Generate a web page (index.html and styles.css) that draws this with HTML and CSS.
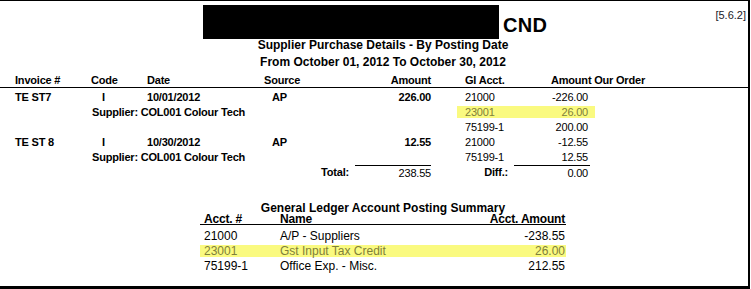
FILE: index.html
```html
<!DOCTYPE html>
<html>
<head>
<meta charset="utf-8">
<link rel="stylesheet" href="styles.css">
</head>
<body>
<div class="page">
  <header class="top">
    <div class="brand">
      <div class="redact"></div>
      <div class="cnd">CND</div>
      <div class="ver">[5.6.2]</div>
    </div>
    <div class="titles">
      <div>Supplier Purchase Details - By Posting Date</div>
      <div>From October 01, 2012 To October 30, 2012</div>
    </div>
  </header>

  <section class="detail">
    <div class="row head">
      <span class="c-inv">Invoice #</span>
      <span class="c-code">Code</span>
      <span class="c-date">Date</span>
      <span class="c-src">Source</span>
      <span class="c-amt">Amount</span>
      <div class="gl"><span class="gl-acct gl-head">Gl Acct.</span><span class="gl-head-amt">Amount Our Order</span></div>
    </div>
    <div class="rows">
      <div class="row">
        <span class="c-inv b">TE ST7</span>
        <span class="c-code b code-val">I</span>
        <span class="c-date b">10/01/2012</span>
        <span class="c-src b src-val">AP</span>
        <span class="c-amt b">226.00</span>
        <div class="gl"><span class="gl-acct">21000</span><span class="gl-amt">-226.00</span></div>
      </div>
      <div class="row">
        <span class="c-supp b">Supplier: COL001 Colour Tech</span>
        <div class="gl hl"><span class="gl-acct">23001</span><span class="gl-amt">26.00</span></div>
      </div>
      <div class="row">
        <div class="gl"><span class="gl-acct">75199-1</span><span class="gl-amt">200.00</span></div>
      </div>
      <div class="row">
        <span class="c-inv b">TE ST 8</span>
        <span class="c-code b code-val">I</span>
        <span class="c-date b">10/30/2012</span>
        <span class="c-src b src-val">AP</span>
        <span class="c-amt b">12.55</span>
        <div class="gl"><span class="gl-acct">21000</span><span class="gl-amt">-12.55</span></div>
      </div>
      <div class="row">
        <span class="c-supp b">Supplier: COL001 Colour Tech</span>
        <div class="gl"><span class="gl-acct">75199-1</span><span class="gl-amt">12.55</span></div>
      </div>
      <div class="row">
        <span class="c-src b total-lbl">Total:</span>
        <span class="c-amt ruled">238.55</span>
        <div class="gl"><span class="gl-acct diff-lbl b">Diff.:</span><span class="gl-amt ruled">0.00</span></div>
      </div>
    </div>
  </section>

  <section class="summary">
    <div class="sum-title">General Ledger Account Posting Summary</div>
    <div class="sum-row sum-head">
      <span class="s-acct">Acct. #</span>
      <span class="s-name">Name</span>
      <span class="s-amt">Acct. Amount</span>
    </div>
    <div class="sum-rows">
      <div class="sum-row">
        <span class="s-acct">21000</span>
        <span class="s-name">A/P - Suppliers</span>
        <span class="s-amt">-238.55</span>
      </div>
      <div class="sum-row hl">
        <span class="s-acct">23001</span>
        <span class="s-name">Gst Input Tax Credit</span>
        <span class="s-amt">26.00</span>
      </div>
      <div class="sum-row">
        <span class="s-acct">75199-1</span>
        <span class="s-name">Office Exp. - Misc.</span>
        <span class="s-amt">212.55</span>
      </div>
    </div>
  </section>
</div>
</body>
</html>
```

FILE: styles.css
```css
html, body {
  margin: 0;
  padding: 0;
  background: #fff;
}

body {
  font-family: "Liberation Sans", Arial, sans-serif;
  color: #000;
}

.page {
  width: 750px;
  height: 289px;
  box-sizing: border-box;
  border-top: 1px solid #000;
  border-right: 2px solid #000;
  border-bottom: 3px solid #000;
  overflow: hidden;
}

/* ---------- top header ---------- */
.top {
  padding-top: 4px;
}

.brand {
  display: flex;
  align-items: flex-start;
  padding-left: 203px;
  padding-right: 2px;
}

.redact {
  width: 296px;
  height: 34px;
  background: #000;
}

.cnd {
  margin-left: 4px;
  margin-top: 9px;
  font-size: 20px;
  font-weight: bold;
  line-height: 23px;
  letter-spacing: 0.3px;
}

.ver {
  margin-left: auto;
  margin-top: 3px;
  font-size: 11px;
  line-height: 15px;
  color: #1a1a2a;
}

.titles {
  margin-top: -2px;
  padding-left: 18px;
  text-align: center;
  font-size: 12px;
  font-weight: bold;
  line-height: 17px;
}

/* ---------- detail table ---------- */
.detail {
  margin-top: 2px;
  font-size: 11px;
  letter-spacing: -0.2px;
}

.row {
  display: grid;
  grid-template-columns: 15px 76px 56px 117px 91px 76px 26px 138px;
  height: 15px;
  line-height: 15px;
  white-space: nowrap;
}

.row.head {
  height: 14px;
  line-height: 14px;
  border-bottom: 1px solid #000;
  font-weight: bold;
}

.rows {
  margin-top: 2px;
}

.b { font-weight: bold; }

.c-inv  { grid-column: 2; }
.c-code { grid-column: 3; }
.c-date { grid-column: 4; }
.c-src  { grid-column: 5; }
.c-amt  { grid-column: 6; text-align: right; }
.c-supp { grid-column: 3 / 7; padding-left: 1px; }
.gl     { grid-column: 8; display: flex; }

.code-val { padding-left: 11px; }
.src-val  { padding-left: 8px; }

.total-lbl {
  text-align: right;
  padding-right: 6px;
}

.ruled {
  border-top: 1px solid #000;
}

.gl-acct {
  flex: 0 0 57px;
  box-sizing: border-box;
  padding-left: 8px;
}

.gl-acct.gl-head { flex-basis: 94px; }

.gl-head-amt { flex: 0 0 auto; }

.gl-amt {
  flex: 0 0 76px;
  box-sizing: border-box;
  text-align: right;
  padding-right: 2px;
}

.diff-lbl {
  text-align: right;
  padding-left: 0;
  padding-right: 6px;
}

.gl.hl {
  background: #fafa80;
  color: #80803a;
  height: 12px;
  line-height: 12px;
  margin-top: 1px;
}

/* ---------- summary ---------- */
.summary {
  width: 366px;
  margin-left: 200px;
  margin-top: 22px;
  font-size: 12px;
}

.sum-title {
  text-align: center;
  font-weight: bold;
  line-height: 12px;
}

.sum-row {
  display: grid;
  grid-template-columns: 80px 1fr auto;
  height: 15px;
  line-height: 15px;
  white-space: nowrap;
}

.sum-row.sum-head {
  height: 10px;
  line-height: 10px;
  font-weight: bold;
  border-bottom: 1px solid #000;
  letter-spacing: -0.2px;
}

.sum-rows {
  margin-top: 4px;
}

.s-acct { padding-left: 4px; }
.s-amt  { text-align: right; padding-right: 1px; }

.sum-row.hl {
  background: #fafa80;
  color: #80803a;
  height: 12px;
  line-height: 12px;
  margin-top: 1px;
  margin-bottom: 2px;
}
```
